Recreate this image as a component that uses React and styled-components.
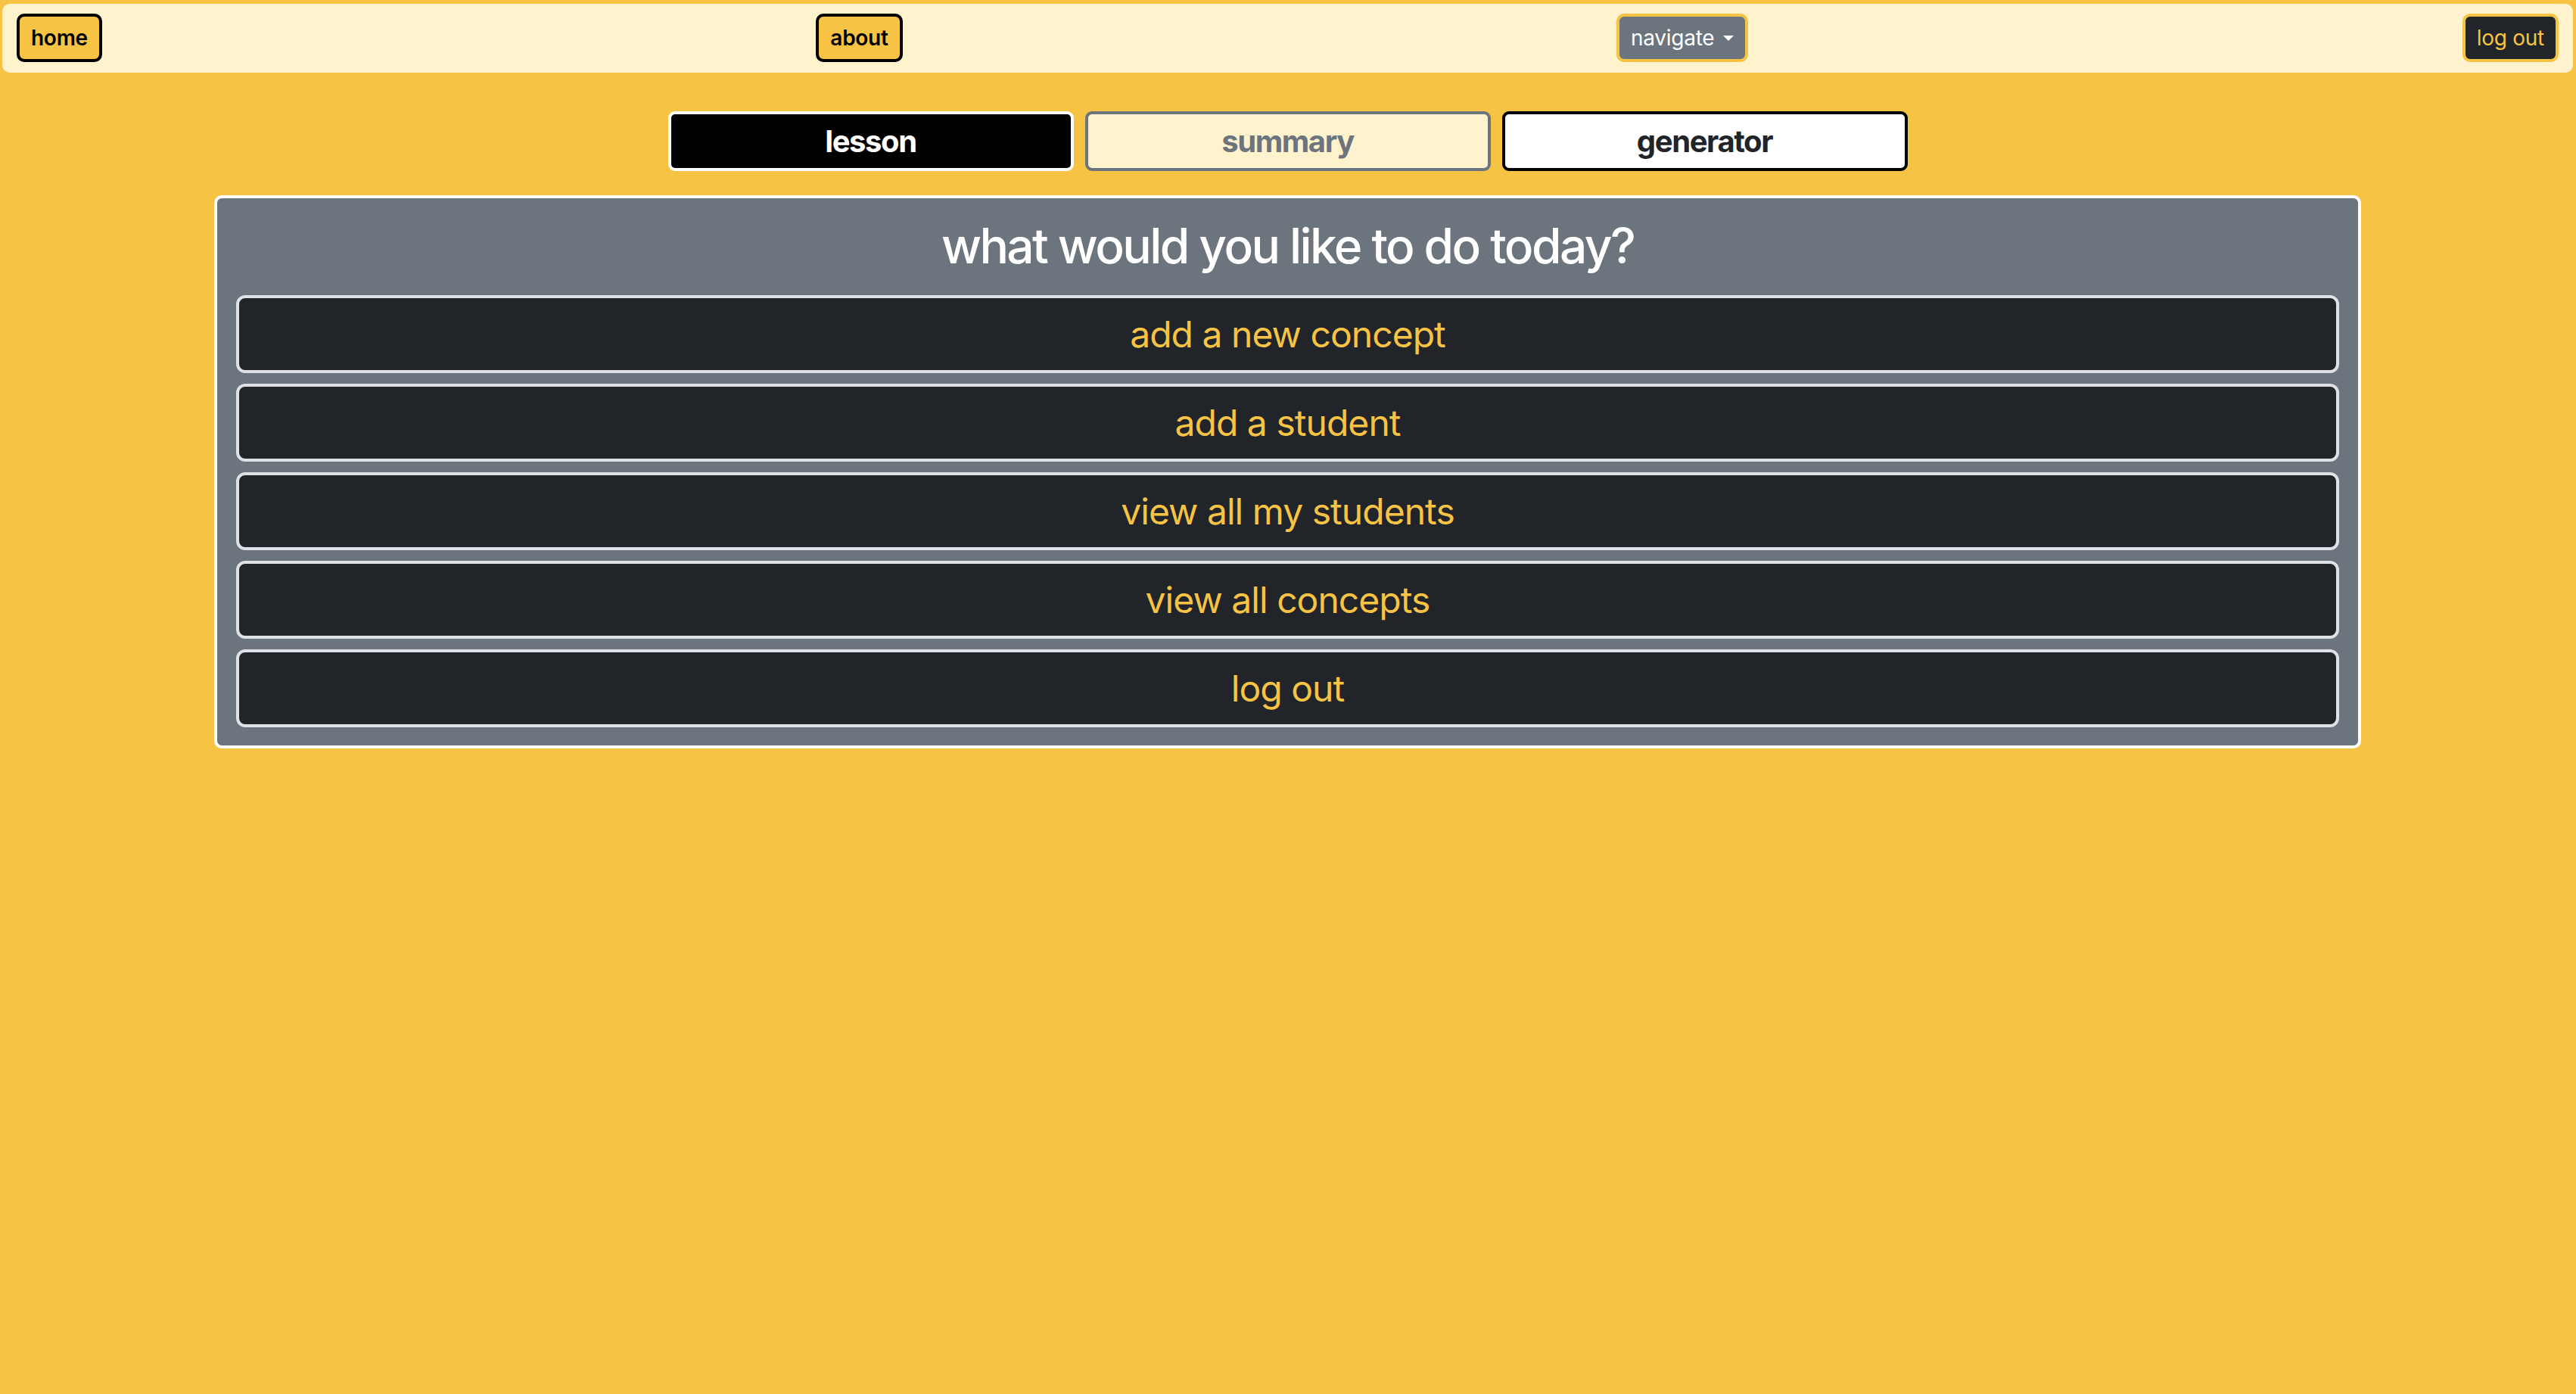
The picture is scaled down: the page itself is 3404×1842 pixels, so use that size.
import styled, { createGlobalStyle, css } from "styled-components";

const GlobalStyle = createGlobalStyle`
  html, body {
    margin: 0;
    padding: 0;
    background: #f6c344;
    min-height: 100vh;
    font-family: Inter, "Noto Sans", "Liberation Sans", sans-serif;
  }
  * {
    box-sizing: border-box;
  }
`;

const navVariants = {
  light: css`
    background: #f6c344;
    border-color: #000;
    color: #000;
    font-weight: 600;
  `,
  grey: css`
    background: #6c757d;
    border-color: #f6c344;
    color: #fff;
    font-weight: 400;
  `,
  dark: css`
    background: #212529;
    border-color: #f6c344;
    color: #f6c344;
    font-weight: 400;
  `,
};

const tabVariants = {
  active: css`
    background: #000;
    border-color: #fff;
    color: #fff;
  `,
  muted: css`
    background: #fff3cd;
    border-color: #6c757d;
    color: #6c757d;
  `,
  plain: css`
    background: #fff;
    border-color: #000;
    color: #212529;
  `,
};

const Page = styled.div`
  min-height: 100vh;
  padding: 5px 4px 0 3px;
`;

const Navbar = styled.nav`
  display: flex;
  align-items: center;
  justify-content: space-between;
  background: #fff3cd;
  border-radius: 10px;
  padding: 13px 19px 14px 19px;
`;

const NavButton = styled.button`
  height: 64px;
  padding: 0 15px;
  border: 4px solid;
  border-radius: 10px;
  font-family: inherit;
  font-size: 28px;
  letter-spacing: -0.01em;
  line-height: 1;
  display: inline-flex;
  align-items: center;
  cursor: pointer;
  ${({ $variant }) => navVariants[$variant]}
`;

const Caret = styled.span`
  display: inline-block;
  margin-left: 12px;
  width: 0;
  height: 0;
  border-top: 7px solid currentColor;
  border-left: 7px solid transparent;
  border-right: 7px solid transparent;
`;

const TabRow = styled.div`
  display: flex;
  justify-content: center;
  gap: 15px;
  margin-top: 51px;
`;

const Tab = styled.button`
  width: 536px;
  height: 79px;
  border: 4px solid;
  border-radius: 9px;
  font-family: inherit;
  font-size: 40px;
  font-weight: 700;
  letter-spacing: -0.035em;
  cursor: pointer;
  ${({ $variant }) => tabVariants[$variant]}
`;

const Panel = styled.section`
  width: 2837px;
  margin: 32px auto 0;
  background: #6c757d;
  border: 4px solid #fff;
  border-radius: 10px;
  padding: 25px 25px 24px;
  display: flex;
  flex-direction: column;
  gap: 14px;
`;

const Heading = styled.h2`
  margin: 0 0 12px;
  text-align: center;
  color: #fff;
  font-size: 64px;
  font-weight: 500;
  letter-spacing: -0.04em;
  line-height: 1.2;
`;

const ActionButton = styled.button`
  height: 103px;
  width: 100%;
  background: #212529;
  border: 4px solid #dee2e6;
  border-radius: 12px;
  color: #f6c344;
  font-family: inherit;
  font-size: 48px;
  font-weight: 400;
  letter-spacing: -0.02em;
  cursor: pointer;
`;

const actions = [
  "add a new concept",
  "add a student",
  "view all my students",
  "view all concepts",
  "log out",
];

export default function App() {
  return (
    <Page>
      <GlobalStyle />
      <Navbar>
        <NavButton $variant="light">home</NavButton>
        <NavButton $variant="light">about</NavButton>
        <NavButton $variant="grey">
          navigate
          <Caret />
        </NavButton>
        <NavButton $variant="dark">log out</NavButton>
      </Navbar>
      <TabRow>
        <Tab $variant="active">lesson</Tab>
        <Tab $variant="muted">summary</Tab>
        <Tab $variant="plain">generator</Tab>
      </TabRow>
      <Panel>
        <Heading>what would you like to do today?</Heading>
        {actions.map((label) => (
          <ActionButton key={label}>{label}</ActionButton>
        ))}
      </Panel>
    </Page>
  );
}
